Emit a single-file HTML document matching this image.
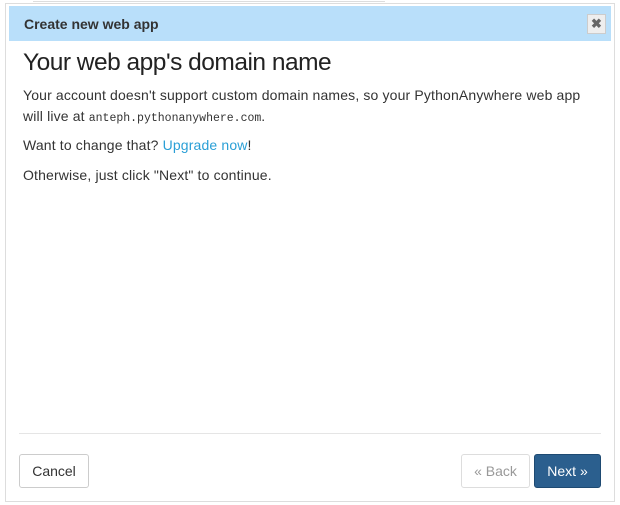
<!DOCTYPE html>
<html><head><style>
body{margin:0;width:620px;height:505px;background:#fff;font-family:"Liberation Sans",sans-serif;position:relative;overflow:hidden;color:#333}
.topbar{position:absolute;left:33px;top:0;width:352px;height:1px;border-bottom:1px solid #ddd}
.box{position:absolute;left:5px;top:3px;width:608px;height:497px;border:1px solid #ddd}
.hdr{position:absolute;left:9px;top:6px;width:602px;height:35px;background:#b9dffa}
.hdr span{position:absolute;left:15px;top:10px;font-size:14px;font-weight:bold;color:#333}
.x{position:absolute;left:587px;top:14px;width:17px;height:18px;border:1px solid #ccc;background:#eee;color:#666;font-size:13px;font-weight:bold;text-align:center;line-height:18px}
h1{position:absolute;left:23px;top:49px;margin:0;font-weight:normal;font-size:24.5px;font-family:"Liberation Sans",sans-serif;letter-spacing:-0.5px;color:#222}
p{position:absolute;left:23px;margin:0;font-size:14px;line-height:21px;letter-spacing:0.15px}
code{font-family:"Liberation Mono",monospace;font-size:11.5px;letter-spacing:0}
a{color:#2a9fd6;text-decoration:none}
.line{position:absolute;left:19px;top:433px;width:582px;border-top:1px solid #e5e5e5}
.btn{position:absolute;top:454px;border:1px solid #ccc;border-radius:3px;font-size:14px;text-align:center;line-height:32px;box-sizing:border-box;height:34px}
</style></head><body>
<div class="topbar"></div>
<div class="box"></div>
<div class="hdr"><span>Create new web app</span></div>
<div class="x">✖</div>
<h1>Your web app's domain name</h1>
<p style="top:85px">Your account doesn't support custom domain names, so your PythonAnywhere web app<br>will live at <code>anteph.pythonanywhere.com</code>.</p>
<p style="top:135px">Want to change that? <a>Upgrade now</a>!</p>
<p style="top:165px">Otherwise, just click "Next" to continue.</p>
<div class="line"></div>
<div class="btn" style="left:19px;width:70px;color:#333">Cancel</div>
<div class="btn" style="left:461px;width:69px;color:#999;border-color:#ddd">« Back</div>
<div class="btn" style="left:534px;width:67px;background:#2b5f8e;border-color:#1e4a72;color:#fff">Next »</div>
</body></html>
